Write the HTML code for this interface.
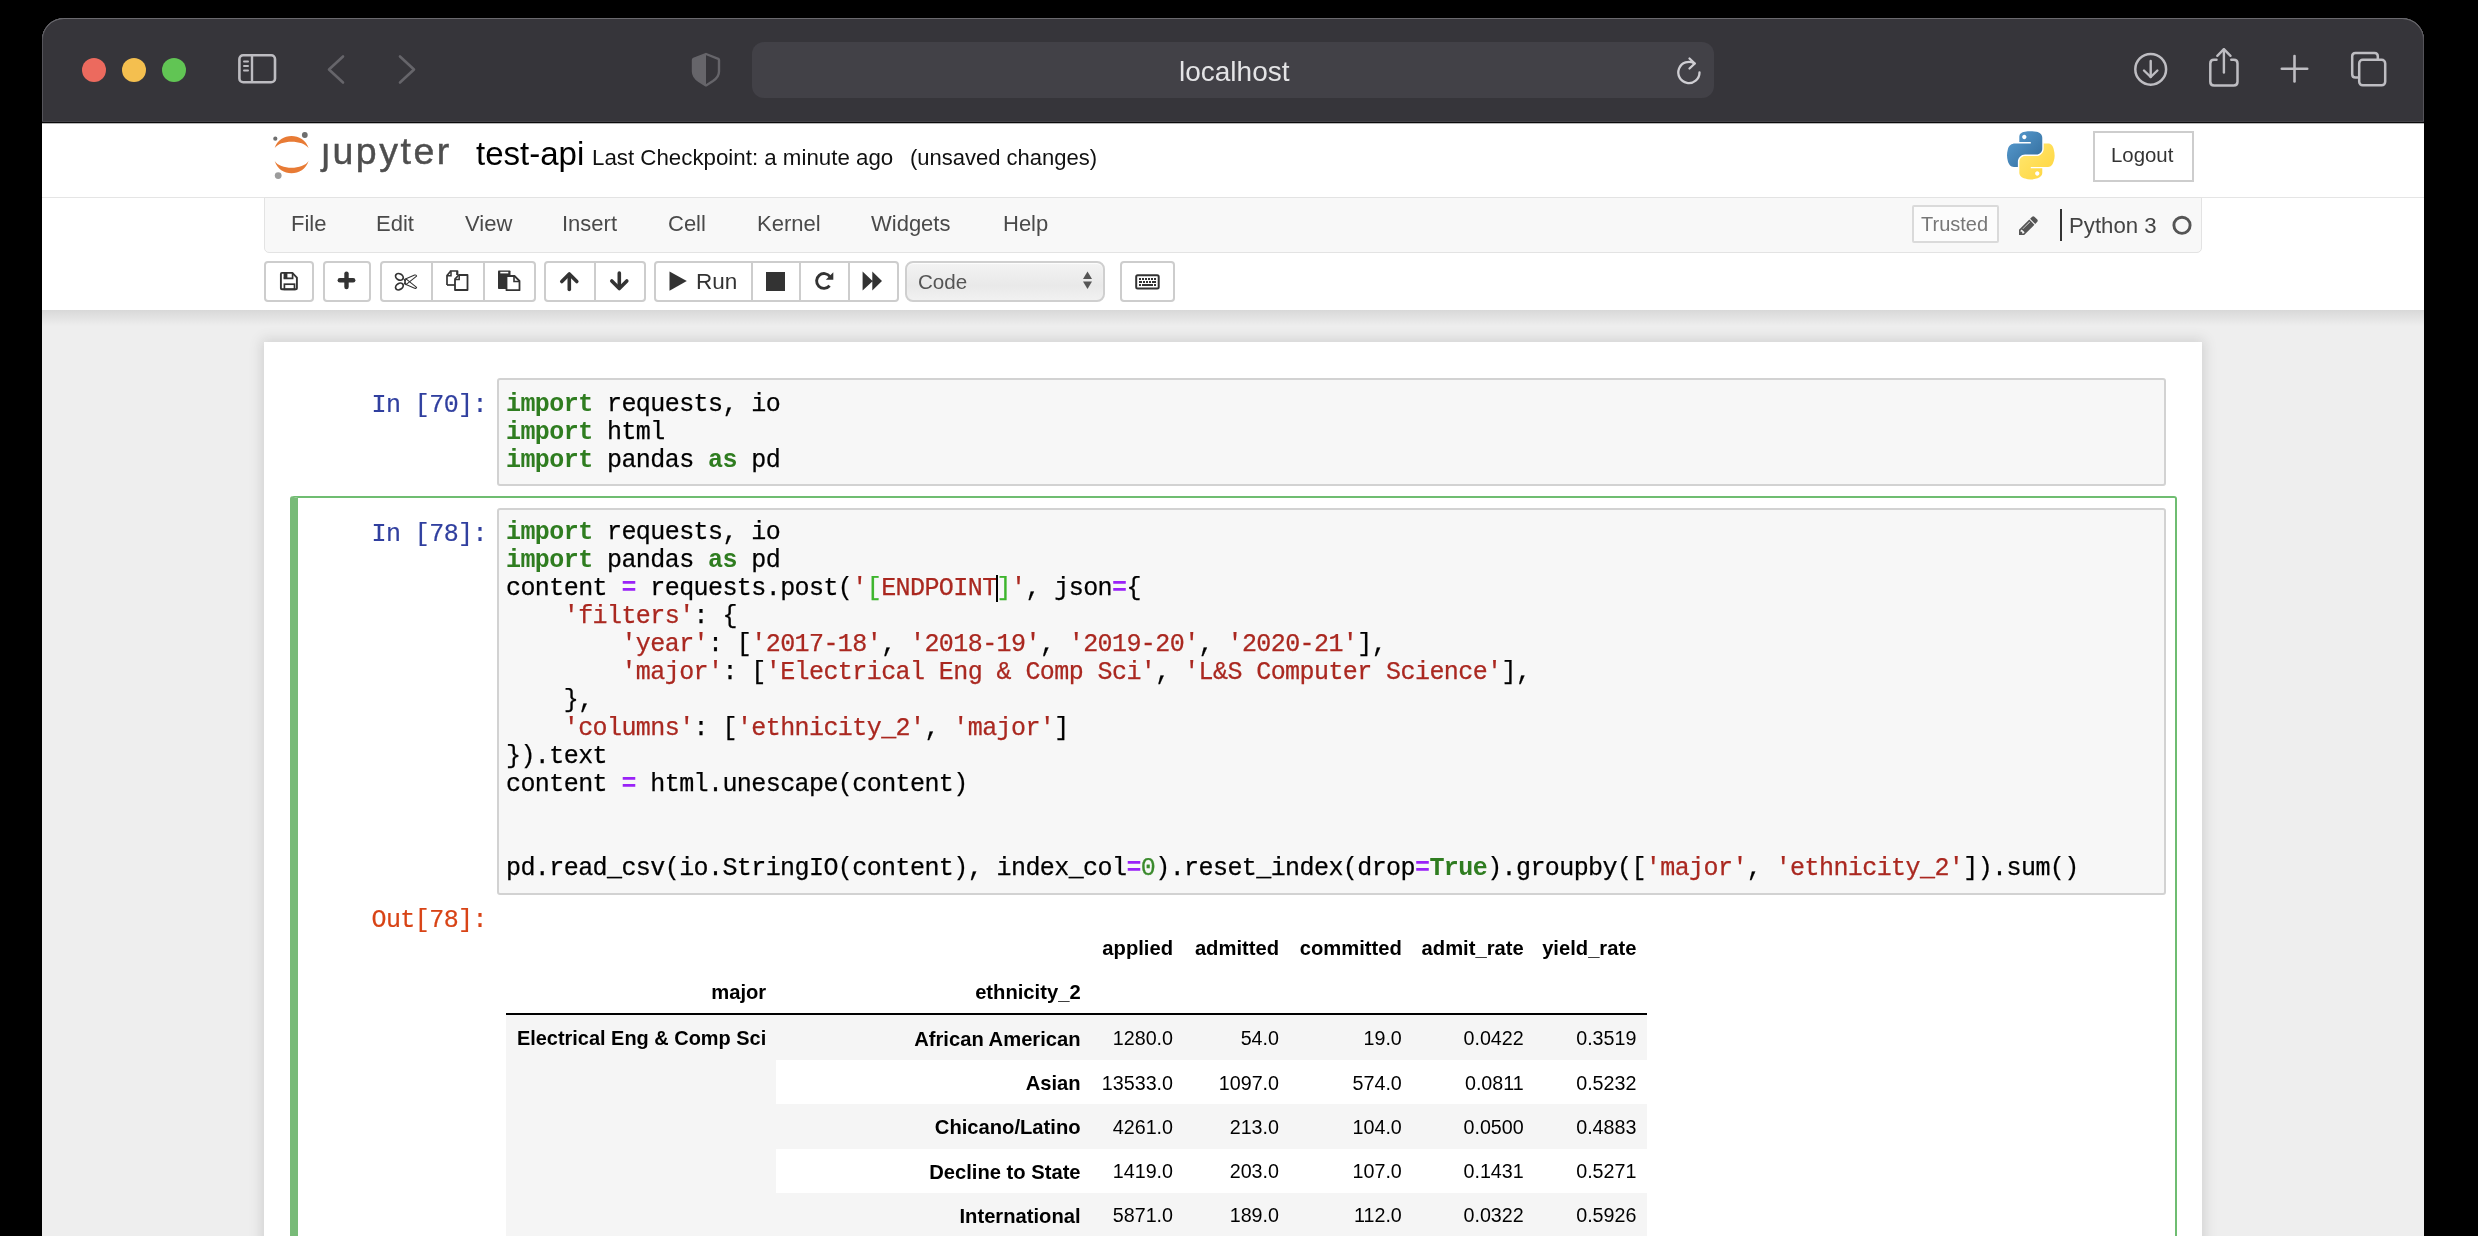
<!DOCTYPE html>
<html><head><meta charset="utf-8">
<style>
*{box-sizing:border-box;margin:0;padding:0}
html,body{width:2478px;height:1236px;overflow:hidden;background:#000}
body{position:relative;font-family:"Liberation Sans",sans-serif}
.a{position:absolute}
.t{position:absolute;white-space:pre;line-height:1}
svg{position:absolute;overflow:visible}
#win{position:absolute;left:42px;top:18px;width:2382px;height:1300px;border-radius:22px 22px 0 0;overflow:hidden;background:#fff}
#titlebar{position:absolute;left:42px;top:18px;width:2382px;height:105px;background:#36353a;border-radius:22px 22px 0 0;box-shadow:inset 0 1px 0 #6a696e, inset 1px 0 0 #55545a, inset -1px 0 0 #55545a}
#tbline{position:absolute;left:42px;top:121px;width:2382px;height:3px;background:linear-gradient(#434247 0,#434247 33%,#0a0a0b 33%,#0a0a0b 67%,#b8b8b8 67%)}
#gray{position:absolute;left:42px;top:310px;width:2382px;height:1000px;background:#eeeeee}
#grayshadow{position:absolute;left:42px;top:310px;width:2382px;height:16px;background:linear-gradient(#d8d8d8,#eeeeee)}
#nb{position:absolute;left:264px;top:342px;width:1938px;height:1000px;background:#fff;box-shadow:0 0 12px 2px rgba(87,87,87,0.2)}
.menu{font-size:22px;color:#4a4a4a}
.btn{top:261px;height:41px;border:2px solid #cdcdcd;border-radius:4px;background:#fff}
.vd{top:262px;width:2px;height:39px;background:#cdcdcd}
.prompt{font-family:"Liberation Mono",monospace;font-size:25px;letter-spacing:-0.575px;line-height:28px;-webkit-text-stroke:0.2px currentColor}
.inbox{border:2px solid #d2d2d2;border-radius:3px;background:#f7f7f7}
.code{position:absolute;white-space:pre;font-family:"Liberation Mono",monospace;font-size:25px;letter-spacing:-0.575px;line-height:28px;color:#000;-webkit-text-stroke:0.25px currentColor}
.kw{color:#2f7d20;font-weight:bold;-webkit-text-stroke:0}
.st{color:#aa2820}
.op{color:#9a22f8;font-weight:bold;-webkit-text-stroke:0}
.nu{color:#3a8a2c}
.mb{color:#3db52c}
.cur{display:inline-block;width:2px;height:27px;vertical-align:top;background:#000;margin-left:-1px;margin-right:-1px;position:relative;top:0px;-webkit-text-stroke:0}
.tc{font-size:19.7px;color:#000;text-align:right}
.bd{font-weight:bold;font-size:20.2px}
.dot{position:absolute;width:24px;height:24px;border-radius:50%}
</style></head>
<body><div id="root" style="position:absolute;left:0;top:0;width:2478px;height:1236px;overflow:hidden;will-change:transform">
<div id="win"></div>
<div id="titlebar"></div>
<div id="tbline"></div>

<!-- traffic lights -->
<div class="dot" style="left:82px;top:58px;background:#ec6a5e"></div>
<div class="dot" style="left:122px;top:58px;background:#f4bf4f"></div>
<div class="dot" style="left:162px;top:58px;background:#61c554"></div>


<!-- sidebar icon -->
<svg style="left:238px;top:54px" width="38" height="30" viewBox="0 0 38 30">
  <rect x="1.4" y="1.3" width="35.6" height="27" rx="3.8" fill="none" stroke="#bdbcc1" stroke-width="2.6"/>
  <line x1="14" y1="1.5" x2="14" y2="28.5" stroke="#bdbcc1" stroke-width="2.4"/>
  <line x1="6" y1="7.5" x2="10" y2="7.5" stroke="#bdbcc1" stroke-width="2" stroke-linecap="round"/>
  <line x1="6" y1="12" x2="10" y2="12" stroke="#bdbcc1" stroke-width="2" stroke-linecap="round"/>
  <line x1="6" y1="16.5" x2="10" y2="16.5" stroke="#bdbcc1" stroke-width="2" stroke-linecap="round"/>
</svg>
<!-- back / forward -->
<svg style="left:320px;top:50px" width="30" height="40" viewBox="0 0 30 40">
  <polyline points="23,6.5 9,19.5 23,32.5" fill="none" stroke="#66656a" stroke-width="2.6" stroke-linecap="round" stroke-linejoin="round"/>
</svg>
<svg style="left:392px;top:50px" width="30" height="40" viewBox="0 0 30 40">
  <polyline points="8,6.5 22,19.5 8,32.5" fill="none" stroke="#66656a" stroke-width="2.6" stroke-linecap="round" stroke-linejoin="round"/>
</svg>
<!-- shield -->
<svg style="left:690px;top:50px" width="32" height="40" viewBox="0 0 32 40">
  <path d="M16 4 L28.3 8.8 Q29 9.2 29 10 L29 21.5 Q29 27 23 31 L16 35.4 L9 31 Q3 27 3 21.5 L3 10 Q3 9.2 3.7 8.8 Z" fill="none" stroke="#66656a" stroke-width="2.4" stroke-linejoin="round"/>
  <path d="M16 4 L3.7 8.8 Q3 9.2 3 10 L3 21.5 Q3 27 9 31 L16 35.4 Z" fill="#66656a"/>
</svg>
<!-- url bar -->
<div class="a" style="left:752px;top:42px;width:962px;height:56px;border-radius:12px;background:#424147"></div>
<div class="t" style="left:1179px;top:58px;font-size:28px;color:#e4e4e6">localhost</div>
<svg style="left:1674px;top:54px" width="30" height="34" viewBox="0 0 30 34">
  <path d="M20.5 9.5 A10.6 10.6 0 1 0 25.5 18.5" fill="none" stroke="#cfced3" stroke-width="2.3" stroke-linecap="round"/>
  <polyline points="15.5,4.5 20.8,9.5 15.5,14.5" fill="none" stroke="#cfced3" stroke-width="2.3" stroke-linecap="round" stroke-linejoin="round"/>
</svg>
<!-- download -->
<svg style="left:2130px;top:49px" width="42" height="42" viewBox="0 0 42 42">
  <circle cx="20.7" cy="20.3" r="15.4" fill="none" stroke="#bebdc2" stroke-width="2.5"/>
  <line x1="20.7" y1="12" x2="20.7" y2="28" stroke="#bebdc2" stroke-width="2.4" stroke-linecap="round"/>
  <polyline points="14,21.5 20.7,28 27.4,21.5" fill="none" stroke="#bebdc2" stroke-width="2.4" stroke-linecap="round" stroke-linejoin="round"/>
</svg>
<!-- share -->
<svg style="left:2205px;top:45px" width="38" height="44" viewBox="0 0 38 44">
  <path d="M11.5 14.8 L9 14.8 Q5.3 14.8 5.3 18.5 L5.3 36.8 Q5.3 40.5 9 40.5 L28.8 40.5 Q32.5 40.5 32.5 36.8 L32.5 18.5 Q32.5 14.8 28.8 14.8 L26.3 14.8" fill="none" stroke="#bebdc2" stroke-width="2.5" stroke-linecap="round"/>
  <line x1="18.9" y1="4.5" x2="18.9" y2="27.5" stroke="#bebdc2" stroke-width="2.4" stroke-linecap="round"/>
  <polyline points="12.3,10.8 18.9,4.2 25.5,10.8" fill="none" stroke="#bebdc2" stroke-width="2.4" stroke-linecap="round" stroke-linejoin="round"/>
</svg>
<!-- plus -->
<svg style="left:2276px;top:50px" width="38" height="38" viewBox="0 0 38 38">
  <line x1="18.5" y1="6" x2="18.5" y2="31.5" stroke="#bebdc2" stroke-width="2.6" stroke-linecap="round"/>
  <line x1="5.8" y1="18.7" x2="31.2" y2="18.7" stroke="#bebdc2" stroke-width="2.6" stroke-linecap="round"/>
</svg>
<!-- tabs -->
<svg style="left:2346px;top:47px" width="46" height="44" viewBox="0 0 46 44">
  <path d="M12.5 30.6 L9.5 30.6 Q6.2 30.6 6.2 27.3 L6.2 9.3 Q6.2 6 9.5 6 L28.5 6 Q31.8 6 31.8 9.3 L31.8 12" fill="none" stroke="#bebdc2" stroke-width="2.5"/>
  <rect x="13.2" y="12.8" width="26" height="25.5" rx="3.6" fill="none" stroke="#bebdc2" stroke-width="2.5"/>
</svg>


<!-- ===== jupyter header ===== -->
<svg style="left:266px;top:128px" width="54" height="54" viewBox="266 128 54 54">
  <path d="M274.7 148.1 C279.5 132 303.5 132 308.6 148.1 C303 139.5 280 139.5 274.7 148.1 Z" fill="#e87b35"/>
  <path d="M274.7 161 C279.5 177.3 303.5 177.3 308.6 161 C303 170 280 170 274.7 161 Z" fill="#e87b35"/>
  <circle cx="275.3" cy="138.7" r="2.1" fill="#6e6e6e"/>
  <circle cx="304.8" cy="135" r="2.9" fill="#6e6e6e"/>
  <circle cx="278.2" cy="175.6" r="3.4" fill="#9c9c9c"/>
</svg>
<div class="t" id="jtxt" style="left:321.5px;top:133px;font-size:37.5px;letter-spacing:2.55px;color:#4e4e4e;-webkit-text-stroke:0.45px #4e4e4e">&#x237;upyter</div>
<div class="t" id="nbname" style="left:476px;top:137px;font-size:33px;color:#000">test-api</div>
<div class="t" id="ckpt" style="left:592px;top:146.5px;font-size:22.3px;color:#111">Last Checkpoint: a minute ago</div>
<div class="t" id="unsaved" style="left:910px;top:147px;font-size:22px;color:#111">(unsaved changes)</div>
<!-- python logo -->
<svg style="left:2007px;top:131px" width="48" height="49" viewBox="0 0 112 113">
  <defs>
    <linearGradient id="pyb" x1="0" y1="0" x2="1" y2="1"><stop offset="0" stop-color="#5a9fd4"/><stop offset="1" stop-color="#306998"/></linearGradient>
    <linearGradient id="pyy" x1="0" y1="0" x2="1" y2="1"><stop offset="0" stop-color="#ffe873"/><stop offset="1" stop-color="#ffd43b"/></linearGradient>
  </defs>
  <path fill="url(#pyb)" d="M54.9 0C50.3 0 46 .4 42.1 1.1 30.8 3.1 28.7 7.3 28.7 15v10.2h26.8v3.4H18.6C10.8 28.7 4 33.3 1.9 42.3c-2.5 10.2-2.6 16.6 0 27.2 1.9 7.9 6.5 13.6 14.3 13.6h9.2V70.8c0-8.8 7.7-16.6 16.7-16.6h26.8c7.5 0 13.4-6.1 13.4-13.6V15c0-7.3-6.1-12.7-13.4-13.9C64.3.3 59.5 0 54.9 0zM40.4 8.2c2.8 0 5 2.3 5 5.1 0 2.8-2.3 5.1-5 5.1-2.8 0-5-2.3-5-5.1 0-2.8 2.3-5.1 5-5.1z"/>
  <path fill="url(#pyy)" d="M85.6 28.7v11.9c0 9.2-7.8 17-16.7 17H42.1c-7.3 0-13.4 6.3-13.4 13.6v25.5c0 7.3 6.3 11.5 13.4 13.6 8.5 2.5 16.6 2.9 26.8 0 6.8-2 13.4-5.9 13.4-13.6V86.5H55.5v-3.4h40.2c7.8 0 10.7-5.4 13.4-13.6 2.8-8.4 2.7-16.5 0-27.2-1.9-7.8-5.6-13.6-13.4-13.6H85.6zM70.6 93.3c2.8 0 5 2.3 5 5.1 0 2.8-2.3 5.1-5 5.1-2.8 0-5-2.3-5-5.1 0-2.8 2.3-5.1 5-5.1z"/>
</svg>
<div class="a" style="left:2093px;top:131px;width:101px;height:51px;border:2px solid #cdcdcd;background:#fff"></div>
<div class="t" id="logout" style="left:2111px;top:145px;font-size:20.4px;color:#333">Logout</div>
<div class="a" style="left:42px;top:197px;width:2382px;height:1px;background:#e5e5e5"></div>

<!-- ===== menubar ===== -->
<div class="a" style="left:264px;top:197px;width:1938px;height:56px;border:1px solid #e3e3e3;border-radius:0 0 5px 5px;background:#f8f8f8"></div>
<div class="t menu" style="left:291px;top:212.8px">File</div>
<div class="t menu" style="left:376px;top:212.8px">Edit</div>
<div class="t menu" style="left:465px;top:212.8px">View</div>
<div class="t menu" style="left:562px;top:212.8px">Insert</div>
<div class="t menu" style="left:668px;top:212.8px">Cell</div>
<div class="t menu" style="left:757px;top:212.8px">Kernel</div>
<div class="t menu" style="left:871px;top:212.8px">Widgets</div>
<div class="t menu" style="left:1003px;top:212.8px">Help</div>
<div class="a" style="left:1912px;top:205px;width:87px;height:38px;border:2px solid #dadada;border-radius:2px;background:#fcfcfc"></div>
<div class="t" style="left:1921px;top:214px;font-size:20px;color:#777">Trusted</div>
<svg style="left:2019px;top:216px" width="19" height="19" viewBox="0 0 1536 1536">
  <path fill="#555" d="M363 1408l91-91-235-235-91 91v107h128v128h107zm523-928q0-22-22-22-10 0-17 7l-542 542q-7 7-7 17 0 22 22 22 10 0 17-7l542-542q7-7 7-17zm-54-192l416 416-832 832H0v-416zm683 96q0 53-37 90l-166 166-416-416 166-165q36-38 90-38 53 0 91 38l235 234q37 39 37 91z"/>
</svg>
<div class="a" style="left:2060px;top:209px;width:2px;height:32px;background:#333"></div>
<div class="t" style="left:2069px;top:214.5px;font-size:22.2px;color:#444">Python 3</div>
<svg style="left:2170px;top:213px" width="24" height="24" viewBox="2170 213 24 24"><circle cx="2182" cy="225.3" r="8.1" fill="none" stroke="#555" stroke-width="2.9"/></svg>


<!-- ===== toolbar ===== -->
<div class="a btn" style="left:264px;width:50px"></div>
<div class="a btn" style="left:323px;width:48px"></div>
<div class="a btn" style="left:380px;width:156px"></div>
<div class="a vd" style="left:431px"></div><div class="a vd" style="left:482.5px"></div>
<div class="a btn" style="left:544px;width:102px"></div>
<div class="a vd" style="left:594px"></div>
<div class="a btn" style="left:654px;width:245px"></div>
<div class="a vd" style="left:751px"></div><div class="a vd" style="left:799px"></div><div class="a vd" style="left:847.5px"></div>
<div class="a" style="left:905px;top:261px;width:200px;height:41px;border:2px solid #cfcfcf;border-radius:8px;background:linear-gradient(#f3f3f3,#e9e9e9 60%,#f1f1f1);box-shadow:inset 0 1px 1px rgba(255,255,255,.8)"></div>
<div class="a btn" style="left:1120px;width:55px"></div>
<!-- save -->
<svg style="left:279px;top:271px" width="20" height="20" viewBox="279 271 20 20">
  <path d="M281.9 272.9 H292.3 L296.9 277.6 V288.2 Q296.9 289.2 295.9 289.2 H281.9 Q280.9 289.2 280.9 288.2 V273.9 Q280.9 272.9 281.9 272.9 Z" fill="none" stroke="#333" stroke-width="1.9" stroke-linejoin="round"/>
  <rect x="283.6" y="272.5" width="3.8" height="5.9" fill="#333"/>
  <path d="M283.6 278.3 H292.6 V272.8" fill="none" stroke="#333" stroke-width="1.7"/>
  <rect x="284.4" y="284.2" width="10.1" height="5.2" fill="none" stroke="#333" stroke-width="1.7"/>
</svg>
<!-- plus -->
<svg style="left:337px;top:271px" width="19" height="19" viewBox="0 0 19 19">
  <line x1="9.5" y1="2.6" x2="9.5" y2="16" stroke="#333" stroke-width="4.4" stroke-linecap="round"/>
  <line x1="2.8" y1="9.3" x2="16.2" y2="9.3" stroke="#333" stroke-width="4.4" stroke-linecap="round"/>
</svg>
<!-- scissors -->
<svg style="left:393px;top:271px" width="26" height="21" viewBox="393 271 26 21">
  <ellipse cx="399.4" cy="276.9" rx="4.1" ry="3.0" transform="rotate(32 399.4 276.9)" fill="none" stroke="#333" stroke-width="1.75"/>
  <ellipse cx="399.4" cy="286.5" rx="4.1" ry="3.0" transform="rotate(-32 399.4 286.5)" fill="none" stroke="#333" stroke-width="1.75"/>
  <path d="M404.3 279.6 L414.6 275.1 Q416.3 274.7 416.6 276.1 L406 284.6 Z" fill="none" stroke="#333" stroke-width="1.05" stroke-linejoin="round"/>
  <path d="M404.3 283.8 L414.6 288.3 Q416.3 288.7 416.6 287.3 L406 278.8 Z" fill="none" stroke="#333" stroke-width="1.05" stroke-linejoin="round"/>
</svg>
<!-- copy -->
<svg style="left:446px;top:270px" width="23" height="21" viewBox="0 0 23 21">
  <path d="M3.8 1 H11 V5 M1 15 V5.5 L4.8 1 H11.5 V5" fill="none" stroke="#333" stroke-width="1.7" stroke-linejoin="round"/>
  <path d="M1 15 H9" fill="none" stroke="#333" stroke-width="1.7"/>
  <path d="M1 5.8 H5 V1.3" fill="none" stroke="#333" stroke-width="1.5"/>
  <path d="M9 9 L12.8 5 H21.5 V20 H9 Z" fill="none" stroke="#333" stroke-width="1.8" stroke-linejoin="round"/>
  <path d="M9 9.4 H13.2 V5.2" fill="none" stroke="#333" stroke-width="1.5"/>
</svg>
<!-- paste -->
<svg style="left:497px;top:270px" width="24" height="22" viewBox="0 0 24 22">
  <rect x="1" y="0.5" width="12.5" height="18.5" rx="0.8" fill="#333"/>
  <rect x="3.3" y="1.8" width="8" height="1.6" fill="#fff"/>
  <path d="M9.5 6 H17.5 L22.5 11 V20.2 H9.5 Z" fill="#fff" stroke="#333" stroke-width="1.8" stroke-linejoin="round"/>
  <path d="M17 6 V11.5 H22.5" fill="none" stroke="#333" stroke-width="1.6"/>
</svg>
<!-- up -->
<svg style="left:559px;top:271px" width="21" height="21" viewBox="0 0 21 21">
  <line x1="10.3" y1="4" x2="10.3" y2="18.5" stroke="#333" stroke-width="3.6" stroke-linecap="round"/>
  <polyline points="2.8,10.5 10.3,3 17.8,10.5" fill="none" stroke="#333" stroke-width="3.6" stroke-linecap="round" stroke-linejoin="round"/>
</svg>
<!-- down -->
<svg style="left:609px;top:271px" width="21" height="21" viewBox="0 0 21 21">
  <line x1="10.3" y1="2" x2="10.3" y2="16.5" stroke="#333" stroke-width="3.6" stroke-linecap="round"/>
  <polyline points="2.8,10 10.3,17.5 17.8,10" fill="none" stroke="#333" stroke-width="3.6" stroke-linecap="round" stroke-linejoin="round"/>
</svg>
<!-- play -->
<svg style="left:669px;top:271px" width="19" height="21" viewBox="0 0 19 21">
  <path d="M0.5 0.5 L17.8 10.1 L0.5 19.7 Z" fill="#333"/>
</svg>
<div class="t" id="runtxt" style="left:696px;top:271px;font-size:22.5px;color:#333">Run</div>
<!-- stop -->
<div class="a" style="left:766px;top:272px;width:19px;height:19px;background:#333"></div>
<!-- restart -->
<svg style="left:812px;top:270px" width="24" height="23" viewBox="812 270 24 23">
  <path d="M830 276.6 A7.4 7.4 0 1 0 829.6 285.8" fill="none" stroke="#333" stroke-width="2.9"/>
  <path d="M833.3 272.2 V279.7 H825.8 Z" fill="#333"/>
</svg>
<!-- forward -->
<svg style="left:862px;top:271px" width="21" height="21" viewBox="0 0 21 21">
  <path d="M0.6 0.6 L10.3 9.8 L10.3 0.6 L20 10.1 L10.3 19.6 L10.3 10.4 L0.6 19.6 Z" fill="#333"/>
</svg>
<div class="t" id="codetxt" style="left:918px;top:272px;font-size:20.6px;color:#555">Code</div>
<svg style="left:1082px;top:270px" width="12" height="21" viewBox="0 0 12 21">
  <path d="M1 9 L5.5 1.5 L10 9 Z" fill="#555"/>
  <path d="M1 11.6 L5.5 19 L10 11.6 Z" fill="#555"/>
</svg>
<!-- keyboard -->
<svg style="left:1135px;top:274px" width="25" height="16" viewBox="0 0 25 16">
  <rect x="1.2" y="1.2" width="22.5" height="13.2" rx="1.5" fill="none" stroke="#333" stroke-width="2"/>
  <g fill="#333">
    <rect x="4" y="4" width="2" height="2"/><rect x="7" y="4" width="2" height="2"/><rect x="10" y="4" width="2" height="2"/><rect x="13" y="4" width="2" height="2"/><rect x="16" y="4" width="2" height="2"/><rect x="19" y="4" width="2" height="2"/>
    <rect x="4" y="7" width="3" height="2"/><rect x="8" y="7" width="2" height="2"/><rect x="11" y="7" width="2" height="2"/><rect x="14" y="7" width="2" height="2"/><rect x="17" y="7" width="4" height="2"/>
    <rect x="4" y="10" width="2" height="2"/><rect x="7" y="10" width="11" height="2"/><rect x="19" y="10" width="2" height="2"/>
  </g>
</svg>

<!-- gray notebook background -->
<div id="gray"></div>
<div id="grayshadow"></div>
<div id="nb"></div>


<!-- ===== cell 1 ===== -->
<div class="t prompt" style="left:371.5px;top:392px;color:#303f9f">In [70]:</div>
<div class="a inbox" style="left:497px;top:378px;width:1669px;height:108px"></div>
<div class="code" style="left:506px;top:391.4px"><b class="kw">import</b> requests, io
<b class="kw">import</b> html
<b class="kw">import</b> pandas <b class="kw">as</b> pd</div>
<!-- ===== cell 2 (selected) ===== -->
<div class="a" style="left:290px;top:496px;width:1887px;height:800px;border:2px solid #6fbd71;border-left:8px solid #78bb78;border-radius:3px"></div>
<div class="t prompt" style="left:371.5px;top:521px;color:#303f9f">In [78]:</div>
<div class="a inbox" style="left:497px;top:507.5px;width:1669px;height:387px"></div>
<div class="code" style="left:506px;top:519.4px"><b class="kw">import</b> requests, io
<b class="kw">import</b> pandas <b class="kw">as</b> pd
content <span class="op">=</span> requests.post(<span class="st">'</span><span class="mb">[</span><span class="st">ENDPOINT</span><span class="cur"></span><span class="mb">]</span><span class="st">'</span>, json<span class="op">=</span>{
    <span class="st">'filters'</span>: {
        <span class="st">'year'</span>: [<span class="st">'2017-18'</span>, <span class="st">'2018-19'</span>, <span class="st">'2019-20'</span>, <span class="st">'2020-21'</span>],
        <span class="st">'major'</span>: [<span class="st">'Electrical Eng &amp; Comp Sci'</span>, <span class="st">'L&amp;S Computer Science'</span>],
    },
    <span class="st">'columns'</span>: [<span class="st">'ethnicity_2'</span>, <span class="st">'major'</span>]
}).text
content <span class="op">=</span> html.unescape(content)


pd.read_csv(io.StringIO(content), index_col<span class="op">=</span><span class="nu">0</span>).reset_index(drop<span class="op">=</span><b class="kw">True</b>).groupby([<span class="st">'major'</span>, <span class="st">'ethnicity_2'</span>]).sum()</div>
<div class="t prompt" style="left:371.5px;top:907px;color:#d84315">Out[78]:</div>
<!-- ===== table ===== -->
<div class="a" style="left:506px;top:1013px;width:1141px;height:2px;background:#000"></div>
<div class="a" style="left:506px;top:1015px;width:270px;height:230px;background:#f5f5f5"></div>
<div class="a" style="left:776px;top:1015px;width:871px;height:45px;background:#f5f5f5"></div>
<div class="a" style="left:776px;top:1104px;width:871px;height:44.5px;background:#f5f5f5"></div>
<div class="a" style="left:776px;top:1192.8px;width:871px;height:52.200000000000045px;background:#f5f5f5"></div>
<div class="t tc bd" style="right:1305.0px;top:937.5px">applied</div>
<div class="t tc bd" style="right:1199.0px;top:937.5px">admitted</div>
<div class="t tc bd" style="right:1076.2px;top:937.5px">committed</div>
<div class="t tc bd" style="right:954.3px;top:937.5px">admit_rate</div>
<div class="t tc bd" style="right:841.6px;top:937.5px">yield_rate</div>
<div class="t tc bd" style="right:1711.8px;top:981.9px">major</div>
<div class="t tc bd" style="right:1397.4px;top:981.9px">ethnicity_2</div>
<div class="t tc bd" style="right:1711.8px;top:1029.1px;font-size:19.95px">Electrical Eng &amp; Comp Sci</div>
<div class="t tc bd" style="right:1397.4px;top:1028.9px">African American</div>
<div class="t tc" style="right:1305.0px;top:1029.3px">1280.0</div>
<div class="t tc" style="right:1199.0px;top:1029.3px">54.0</div>
<div class="t tc" style="right:1076.2px;top:1029.3px">19.0</div>
<div class="t tc" style="right:954.3px;top:1029.3px">0.0422</div>
<div class="t tc" style="right:841.6px;top:1029.3px">0.3519</div>
<div class="t tc bd" style="right:1397.4px;top:1073.1px">Asian</div>
<div class="t tc" style="right:1305.0px;top:1073.5px">13533.0</div>
<div class="t tc" style="right:1199.0px;top:1073.5px">1097.0</div>
<div class="t tc" style="right:1076.2px;top:1073.5px">574.0</div>
<div class="t tc" style="right:954.3px;top:1073.5px">0.0811</div>
<div class="t tc" style="right:841.6px;top:1073.5px">0.5232</div>
<div class="t tc bd" style="right:1397.4px;top:1117.3px">Chicano/Latino</div>
<div class="t tc" style="right:1305.0px;top:1117.7px">4261.0</div>
<div class="t tc" style="right:1199.0px;top:1117.7px">213.0</div>
<div class="t tc" style="right:1076.2px;top:1117.7px">104.0</div>
<div class="t tc" style="right:954.3px;top:1117.7px">0.0500</div>
<div class="t tc" style="right:841.6px;top:1117.7px">0.4883</div>
<div class="t tc bd" style="right:1397.4px;top:1161.5px">Decline to State</div>
<div class="t tc" style="right:1305.0px;top:1161.9px">1419.0</div>
<div class="t tc" style="right:1199.0px;top:1161.9px">203.0</div>
<div class="t tc" style="right:1076.2px;top:1161.9px">107.0</div>
<div class="t tc" style="right:954.3px;top:1161.9px">0.1431</div>
<div class="t tc" style="right:841.6px;top:1161.9px">0.5271</div>
<div class="t tc bd" style="right:1397.4px;top:1205.7px">International</div>
<div class="t tc" style="right:1305.0px;top:1206.1px">5871.0</div>
<div class="t tc" style="right:1199.0px;top:1206.1px">189.0</div>
<div class="t tc" style="right:1076.2px;top:1206.1px">112.0</div>
<div class="t tc" style="right:954.3px;top:1206.1px">0.0322</div>
<div class="t tc" style="right:841.6px;top:1206.1px">0.5926</div>
</div></body></html>
